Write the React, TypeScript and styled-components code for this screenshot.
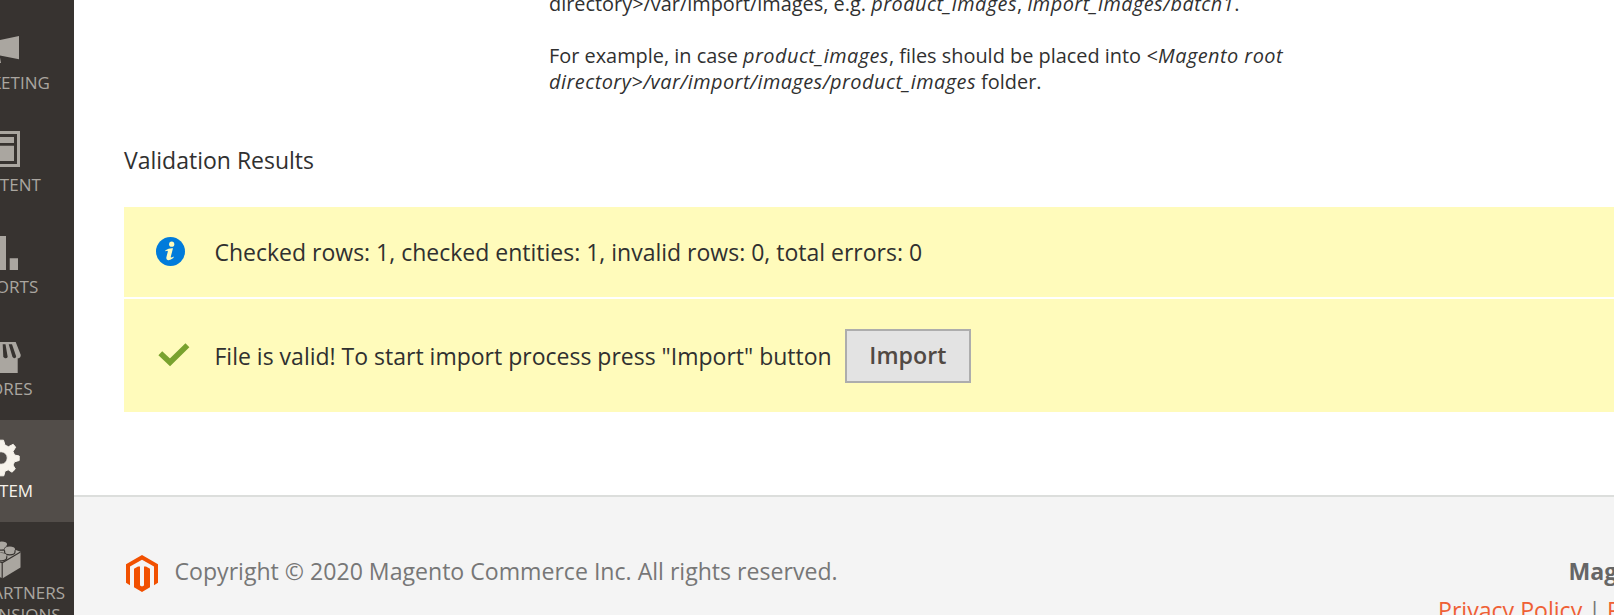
import React from "react";
import styled, { createGlobalStyle } from "styled-components";

const Global = createGlobalStyle`
  *, *::before, *::after { box-sizing: border-box; }
  body { margin: 0; background: #fff; overflow: hidden; }
`;

const Page = styled.div`
  display: flex;
  width: 100%;
  height: 615px;
  overflow: hidden;
  color: #303030;
  font-family: "Open Sans", "Noto Sans", sans-serif;
  font-size: 23px;
`;

const Sidebar = styled.nav`
  flex: 0 0 146px;
  margin-left: -72px;
  height: 615px;
  padding-top: 12px;
  background: #373330;
  overflow: hidden;
`;

const MenuItem = styled.a<{ $active?: boolean }>`
  display: flex;
  flex-direction: column;
  align-items: center;
  height: 102px;
  padding-top: 17px;
  color: ${(p) => (p.$active ? "#f7f3eb" : "#aaa6a0")};
  background: ${(p) => (p.$active ? "#524d49" : "transparent")};

  svg { display: block; flex: none; fill: currentColor; overflow: visible; }
`;

const MenuLabel = styled.span`
  margin: 7px 0 0 2px;
  font-size: 17px;
  line-height: 21.5px;
  text-align: center;
  text-transform: uppercase;
  white-space: pre;
`;

const Main = styled.main`
  flex: 1;
  min-width: 0;
  display: flex;
  flex-direction: column;
`;

const Content = styled.div`
  height: 495px;
  padding-left: 50px;
`;

const Note = styled.div`
  margin: -9px 0 0 425px;
  width: 760px;
  font-size: 19.9px;
  line-height: 26px;
  white-space: nowrap;

  p { margin: 0 0 26px; }
  em { letter-spacing: 0.47px; }
`;

const Heading = styled.h3`
  margin: 49px 0 0;
  font-size: 23px;
  font-weight: 400;
  line-height: 32px;
`;

const Message = styled.div<{ $height: number }>`
  display: flex;
  align-items: center;
  height: ${(p) => p.$height}px;
  margin-bottom: 2px;
  background: #fffbbb;
  white-space: nowrap;
`;

const Messages = styled.div`
  margin-top: 31px;
`;

const IconCell = styled.span<{ $inset: number }>`
  flex: 0 0 90.5px;
  padding: 0 0 1px ${(p) => p.$inset}px;
  svg { display: block; }
`;

const ImportButton = styled.button`
  width: 126px;
  height: 54px;
  margin-left: 13.2px;
  padding: 0;
  border: 2px solid #adadad;
  background: #e3e3e3;
  color: #514943;
  font: 600 23.2px/1 "Open Sans", "Noto Sans", sans-serif;
`;

const Footer = styled.footer`
  display: flex;
  justify-content: space-between;
  flex: 1;
  padding: 55px 0 0 50px;
  border-top: 2px solid #dcdedc;
  background: #f4f4f4;
  color: #777;
  font-size: 23.1px;
  line-height: 39px;
  white-space: nowrap;
  overflow: hidden;
`;

const Copyright = styled.div`
  display: flex;
  gap: 16.5px;
  svg { display: block; margin: 3px 0 0 2px; }
`;

const Legal = styled.div`
  width: 176px;
`;

const Version = styled.div`
  padding-left: 130.5px;
  b { color: #666; }
`;

const FooterLink = styled.a`
  color: #ef6035;
`;

const Megaphone = () => (
  <svg width="36" height="36" viewBox="0 0 36 36">
    <path d="M0 13 6 12.5V25L0 24ZM7.5 13 36 7V30.3L7.5 24.5ZM8 26 17 28.5 18 34H11Z" />
  </svg>
);

const LayoutIcon = () => (
  <svg width="38" height="36" viewBox="0 0 38 36">
    <path fillRule="evenodd" d="M0 0H38V36H0ZM3 3V33H35V3ZM6 6H32V12H6ZM6 14.7H14V30H6ZM17 14.7H32V30H17Z" />
  </svg>
);

const Bars = () => (
  <svg width="34" height="36" viewBox="0 0 34 36">
    <path d="M0 15H8.3V37H0ZM12 3H22V37H12ZM25.7 25.3H34V37H25.7Z" />
  </svg>
);

const Storefront = () => (
  <svg width="40" height="36" viewBox="0 0 40 36">
    <path d="M5.3 7H34.7L39.8 20Q39.8 22.5 38 23.3H36.7V38H3.3V23.3H2Q.2 22.5 .2 20Z" />
    <path
      fill="#373330"
      d="M21.7 9.3H24.5L26.7 22Q26 23.5 24 23.3L22.3 22ZM27.7 9.3H31L35.2 21.5Q35 23.5 33 23.3L31.5 22ZM18.3 9.3H15.5L13.3 22Q14 23.5 16 23.3L17.7 22ZM12.3 9.3H9L4.8 21.5Q5 23.5 7 23.3L8.5 22Z"
    />
  </svg>
);

const Gear = () => (
  <svg width="38" height="36" viewBox="-19 -21 38 36">
    <path
      fillRule="evenodd"
      strokeLinejoin="round"
      stroke="currentColor"
      strokeWidth="1"
      d="M-2.5-17.8H2.5L4-12.8 7.5-11.3 12.2-13.7 14.6-10.8 12-6.5 13.5-3 18.2-2V2.5L13.5 3.8 12 7 14.3 11 11 14.2 7.2 11.8 4 13.2 2.8 17.8H-2.8L-4 13.2-7.2 11.8-11 14.2-14.3 11-12 7-13.5 3.8-18.2 2.5V-2L-13.5-3-12-6.5-14.6-10.8-12.2-13.7-7.5-11.3-4-12.8ZM0-6.3A6.3 6.3 0 1 0 0 6.3A6.3 6.3 0 1 0 0-6.3Z"
    />
  </svg>
);

const Brick = () => (
  <svg width="38" height="36" viewBox="0 0 38 36">
    <path d="M1 15 18 5 38.5 12.7V28.5L20.7 39.3 1 31Z" />
    <g stroke="#373330" strokeWidth="1.2">
      <path fill="none" d="M1 16 20.2 23.8 38.5 13M20.2 23.8V39.5" />
      <path d="M14.5 5.3V8.3A5.2 2.8 0 0 0 25 8.3V5.3A5.2 2.8 0 0 0 14.5 5.3ZM22.6 10.3V13A5.2 2.8 0 0 0 33 13V10.3A5.2 2.8 0 0 0 22.6 10.3ZM14.2 17V19A5.2 2.8 0 0 0 24.7 19V17A5.2 2.8 0 0 0 14.2 17Z" />
    </g>
    <ellipse cx="19.8" cy="5.2" rx="5.2" ry="2.7" />
    <ellipse cx="27.8" cy="10.2" rx="5.2" ry="2.7" />
    <ellipse cx="19.5" cy="16.6" rx="5.2" ry="2.7" />
  </svg>
);

const InfoIcon = () => (
  <svg width="29" height="29" viewBox="0 0 29 29">
    <circle cx="14.5" cy="14.5" r="14.5" fill="#007bdb" />
    <circle cx="15.7" cy="7.2" r="2.6" fill="#fffbbb" />
    <path
      fill="#fffbbb"
      d="M9.5 13.2Q13 10.8 17 11.2L14.8 19.7Q14.4 21.4 17.8 19.6L17.4 21.1Q14 23.8 11.5 23.1 9.8 22.3 10.5 19.8L11.8 14.7Q12.2 13.2 9.2 14.2Z"
    />
  </svg>
);

const CheckIcon = () => (
  <svg width="32" height="24" viewBox="0 0 32 24">
    <path fill="none" stroke="#79a22e" strokeWidth="5.6" d="M2.3 10.3 12 19.3 29.4 2.3" />
  </svg>
);

const Logo = () => (
  <svg width="32" height="37" viewBox="0 0 32 37" fill="#f15000">
    <path d="M16 0 32 9.2V27.7L28 30.2V11.6L16 4.7 4 11.6V30.2L0 27.7V9.2Z" />
    <path d="M8 13.8 12 11.5H14V30.4L16 31.6 18 30.4V11.5H20L24 13.8V32.3L16 37 8 32.3Z" />
  </svg>
);

const menu = [
  { label: "Marketing", Icon: Megaphone },
  { label: "Content", Icon: LayoutIcon },
  { label: "Reports", Icon: Bars },
  { label: "Stores", Icon: Storefront },
  { label: "System", Icon: Gear, active: true },
  { label: "Find Partners\n& Extensions", Icon: Brick },
];

export default function App() {
  return (
    <Page>
      <Global />
      <Sidebar>
        {menu.map(({ label, Icon, active }) => (
          <MenuItem key={label} $active={active}>
            <Icon />
            <MenuLabel>{label}</MenuLabel>
          </MenuItem>
        ))}
      </Sidebar>
      <Main>
        <Content>
          <Note>
            <p>
              directory&gt;/var/import/images, e.g. <em>product_images</em>, <em>import_images/batch1</em>.
            </p>
            <p>
              For example, in case <em>product_images</em>, files should be placed into <em>&lt;Magento root</em>
              <br />
              <em>directory&gt;/var/import/images/product_images</em> folder.
            </p>
          </Note>
          <Heading>Validation Results</Heading>
          <Messages>
            <Message $height={90}>
              <IconCell $inset={32}><InfoIcon /></IconCell>
              <span>Checked rows: 1, checked entities: 1, invalid rows: 0, total errors: 0</span>
            </Message>
            <Message $height={113}>
              <IconCell $inset={33.5}><CheckIcon /></IconCell>
              <span>File is valid! To start import process press "Import" button</span>
              <ImportButton>Import</ImportButton>
            </Message>
          </Messages>
        </Content>
        <Footer>
          <Copyright>
            <Logo />
            <span>Copyright © 2020 Magento Commerce Inc. All rights reserved.</span>
          </Copyright>
          <Legal>
            <Version><b>Magento</b></Version>
            <FooterLink>Privacy Policy</FooterLink> | <FooterLink>Report an Issue</FooterLink>
          </Legal>
        </Footer>
      </Main>
    </Page>
  );
}
